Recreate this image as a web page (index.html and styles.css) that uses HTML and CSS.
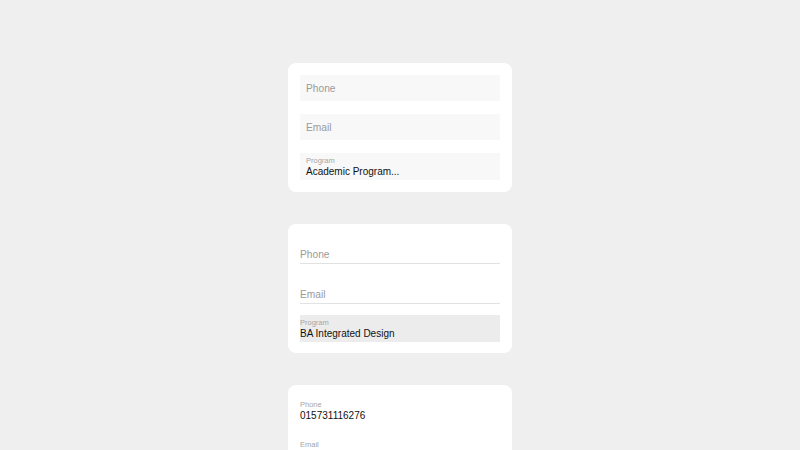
FILE: index.html
```html
<!DOCTYPE html>
<html lang="en">
<head>
<meta charset="utf-8">
<title>Form fields</title>
<link rel="stylesheet" href="styles.css">
</head>
<body>
<main class="page">
  <section class="card">
    <div class="field filled-bg"><span class="placeholder">Phone</span></div>
    <div class="field filled-bg"><span class="placeholder">Email</span></div>
    <div class="field filled-bg stacked">
      <span class="label">Program</span>
      <span class="value">Academic Program...</span>
    </div>
  </section>

  <section class="card">
    <div class="uline"><span class="placeholder">Phone</span></div>
    <div class="uline gap12"><span class="placeholder">Email</span></div>
    <div class="select-grey stacked">
      <span class="label">Program</span>
      <span class="value">BA Integrated Design</span>
    </div>
  </section>

  <section class="card">
    <div class="plain stacked">
      <span class="label">Phone</span>
      <span class="value">015731116276</span>
    </div>
    <div class="plain stacked gap12">
      <span class="label">Email</span>
      <span class="value">&nbsp;</span>
    </div>
  </section>
</main>
</body>
</html>
```
FILE: styles.css
```css
html, body {
  margin: 0;
  padding: 0;
  background: #efefef;
  font-family: "Liberation Sans", Arial, sans-serif;
}

.page {
  display: flex;
  flex-direction: column;
  align-items: center;
  gap: 32px;
  padding-top: 63px;
  padding-bottom: 40px;
}

.card {
  width: 224px;
  box-sizing: border-box;
  background: #ffffff;
  border-radius: 8px;
  padding: 12px 12px 12px;
  display: flex;
  flex-direction: column;
}

.card:nth-child(2) {
  padding-bottom: 11px;
}

.field {
  box-sizing: border-box;
  height: 26px;
  display: flex;
  align-items: center;
  padding: 1px 6px 0;
}

.field + .field {
  margin-top: 13px;
}

.filled-bg {
  background: #f8f8f8;
}

.field.stacked {
  height: 27px;
  padding-top: 4px;
}

.stacked {
  flex-direction: column;
  align-items: flex-start;
  justify-content: flex-start;
  padding-top: 4px;
}

.placeholder {
  font-size: 10.2px;
  line-height: 12px;
  color: #9a9a9a;
}

.label {
  font-size: 7.5px;
  line-height: 8.6px;
  color: #a6a6a6;
}

.value {
  font-size: 10px;
  line-height: 11.5px;
  color: #111111;
}

.uline {
  box-sizing: border-box;
  height: 28px;
  display: flex;
  align-items: flex-end;
  padding-bottom: 2px;
  border-bottom: 1px solid #e2e2e2;
}

.gap12 {
  margin-top: 12px;
}

.select-grey {
  box-sizing: border-box;
  height: 27px;
  margin-top: 11px;
  background: #ececec;
  display: flex;
}

.plain {
  box-sizing: border-box;
  height: 28px;
  display: flex;
}
```
